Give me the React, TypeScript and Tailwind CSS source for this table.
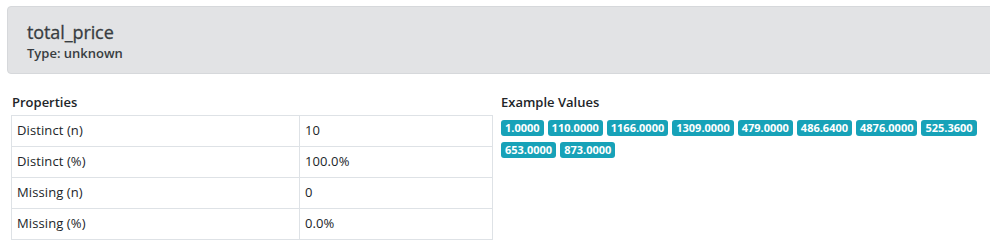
import React from 'react'

const FONT = "font-['Open_Sans','Noto_Sans',sans-serif]"

const PROPERTIES: [string, string][] = [
  ['Distinct (n)', '10'],
  ['Distinct (%)', '100.0%'],
  ['Missing (n)', '0'],
  ['Missing (%)', '0.0%'],
]

const EXAMPLES = [
  '1.0000',
  '110.0000',
  '1166.0000',
  '1309.0000',
  '479.0000',
  '486.6400',
  '4876.0000',
  '525.3600',
  '653.0000',
  '873.0000',
]

function Header() {
  return (
    <div className="ml-[7px] mt-[6px] w-[1000px] h-[68px] rounded-[4px] border border-[#d6d8db] bg-[#e2e3e5] text-[#383d41] pl-[19px] pt-[13px]">
      <h5 className="text-[18px] leading-[24px] font-medium tracking-[-0.1px] [-webkit-text-stroke:0.3px_#383d41]">total_price</h5>
      <p className="text-[13px] leading-[19px] font-semibold">Type: unknown</p>
    </div>
  )
}

function PropertiesTable() {
  return (
    <div className="w-[482px] ml-[11px]">
      <h6 className="text-[13px] leading-[18px] font-semibold pl-px mb-[4px]">Properties</h6>
      <table className="w-full border-collapse text-[13px] tracking-[0.1px]">
        <tbody>
          {PROPERTIES.map(([k, v]) => (
            <tr key={k} className="h-[31px]">
              <td className="w-[288px] border border-[#dee2e6] px-[5px] align-middle">{k}</td>
              <td className="border border-[#dee2e6] px-[5px] align-middle">{v}</td>
            </tr>
          ))}
        </tbody>
      </table>
    </div>
  )
}

function ExampleValues() {
  return (
    <div className="ml-[8px] w-[480px]">
      <h6 className="text-[13px] leading-[18px] font-semibold mb-[9px]">Example Values</h6>
      <div className="flex flex-wrap gap-x-[4px] gap-y-[6px]">
        {EXAMPLES.map(v => (
          <span
            key={v}
            className="inline-block h-[16px] rounded-[3px] bg-[#17a2b8] px-[4px] text-[11px] leading-[16px] font-bold text-white"
          >
            {v}
          </span>
        ))}
      </div>
    </div>
  )
}

export default function App() {
  return (
    <div className={`w-[990px] h-[243px] overflow-hidden bg-white text-[#212529] ${FONT}`}>
      <Header />
      <div className="flex mt-[19px]">
        <PropertiesTable />
        <ExampleValues />
      </div>
    </div>
  )
}
